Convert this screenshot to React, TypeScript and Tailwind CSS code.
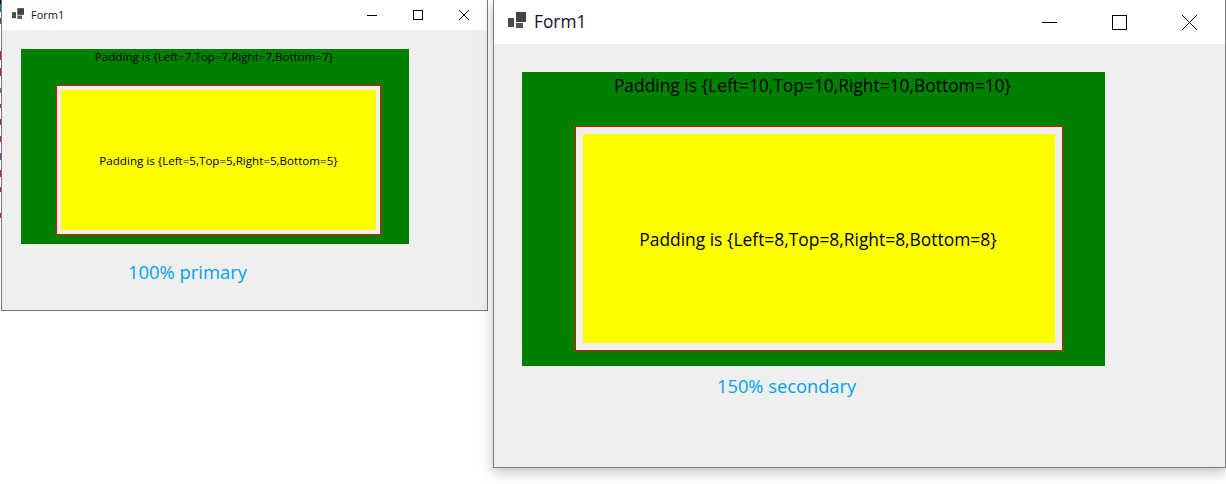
import clsx from 'clsx'

const font = "[font-family:'Open_Sans',sans-serif]"

// bits of the desktop behind the window, left edge of the capture
const desktopEdge = [
  'h-[4px] bg-black',
  'h-[8px] bg-[#0f7f86]',
  'h-[6px] bg-white',
  'h-[6px] bg-[#a8325a]',
  'h-[27px] bg-white',
  'h-[9px] bg-[#b01c66]',
  'h-[8px] bg-white',
  'h-[8px] bg-[#a81c6c]',
  'h-[12px] bg-white',
  'h-[5px] bg-[#a85a50]',
  'h-[11px] bg-white',
  'h-[4px] bg-[#a83060]',
  'h-[11px] bg-white',
  'h-[6px] bg-[#b01c6c]',
  'h-[11px] bg-white',
  'h-[6px] bg-[#a83048]',
  'h-[11px] bg-white',
  'h-[7px] bg-[#8a3a9a]',
  'h-[10px] bg-white',
  'h-[7px] bg-[#b01c66]',
  'h-[10px] bg-white',
  'h-[5px] bg-[#a83048]',
  'h-[21px] bg-white',
  'h-[5px] bg-[#a83048]',
]

function FormIcon({ width, height }: { width: number; height: number }) {
  return (
    <svg width={width} height={height} viewBox="0 0 18 16" className="shrink-0">
      <rect x="0" y="6" width="6" height="9" fill="#4a4a4a" />
      <rect x="8" y="0" width="10" height="10" fill="#444444" />
      <rect x="8" y="11" width="7" height="5" fill="#555555" />
    </svg>
  )
}

// window caption glyphs, drawn 1px and square like the Windows ones
function CaptionButtons({ glyph, width, className }: { glyph: number; width: string; className?: string }) {
  const s = glyph
  return (
    <div className={clsx('ml-auto flex h-full', className)}>
      <div className={`${width} flex items-center justify-center`}>
        <svg width={s} height={s} viewBox={`0 0 ${s} ${s}`}>
          <line x1="0" y1={Math.floor(s / 2) + 0.5} x2={s} y2={Math.floor(s / 2) + 0.5} stroke="#000" />
        </svg>
      </div>
      <div className={`${width} flex items-center justify-center`}>
        <svg width={s} height={s} viewBox={`0 0 ${s} ${s}`}>
          <rect x="0.5" y="0.5" width={s - 1} height={s - 1} fill="none" stroke="#000" />
        </svg>
      </div>
      <div className={`${width} flex items-center justify-center`}>
        <svg width={s} height={s} viewBox={`0 0 ${s} ${s}`}>
          <path d={`M0 0L${s} ${s}M${s} 0L0 ${s}`} stroke="#000" fill="none" />
        </svg>
      </div>
    </div>
  )
}

function App() {
  return (
    <div className={`w-[1226px] h-[484px] bg-white flex items-start overflow-hidden ${font}`}>
      <div className="w-px shrink-0 flex flex-col">
        {desktopEdge.map((c, i) => (
          <div key={i} className={c} />
        ))}
      </div>

      {/* 100% window */}
      <div className="w-[487px] h-[311px] shrink-0 flex flex-col bg-[#efefef] border-l border-r border-b border-[#7a7a7a]">
        <div className="h-[30px] bg-white flex items-center pl-[10px] shrink-0">
          <div className="mt-[-3px]">
            <FormIcon width={12} height={11} />
          </div>
          <span className="ml-[7px] text-[11px] text-[#0f0f2a]">Form1</span>
          <CaptionButtons glyph={10} width="w-[46px]" />
        </div>
        <div className="pl-[19px] pt-[19px]">
          <div className="w-[388px] h-[195px] bg-[#008000] flex flex-col items-center">
            <p className="text-[11.6px] leading-[16px] text-black whitespace-nowrap mr-[2px]">Padding is {'{'}Left=7,Top=7,Right=7,Bottom=7{'}'}</p>
            <div className="mt-5 self-start ml-[35px] w-[325px] h-[150px] border border-[#ff0000] bg-[#efefef] p-[4px] shrink-0">
              <div className="w-full h-full bg-[#ffff00] flex items-center justify-center">
                <p className="text-[11.6px] text-black whitespace-nowrap mt-[2px]">Padding is {'{'}Left=5,Top=5,Right=5,Bottom=5{'}'}</p>
              </div>
            </div>
          </div>
          <p className="ml-[107px] mt-[16px] text-[18.4px] leading-[24px] text-[#00a2ed]">100% primary</p>
        </div>
      </div>

      {/* 150% window */}
      <div className="w-[733px] h-[468px] ml-[5px] shrink-0 flex flex-col bg-[#efefef] border-l border-r border-b border-[#7a7a7a] shadow-[0_4px_12px_rgba(0,0,0,0.25)]">
        <div className="h-[44px] bg-white flex items-center pl-[14px] shrink-0">
          <div className="mt-[-4px]">
            <FormIcon width={18} height={16} />
          </div>
          <span className="ml-[8px] text-[17.3px] text-[#0f0f2a]">Form1</span>
          <CaptionButtons glyph={15} width="w-[70px]" className="pr-px" />
        </div>
        <div className="pl-7 pt-7">
          <div className="w-[583px] h-[294px] bg-[#008000] flex flex-col items-center">
            <p className="text-[17.4px] leading-[26px] text-black whitespace-nowrap mr-[2px]">Padding is {'{'}Left=10,Top=10,Right=10,Bottom=10{'}'}</p>
            <div className="mt-7 self-start ml-[53px] w-[488px] h-[225px] border border-[#ff0000] bg-[#efefef] p-[7px] shrink-0">
              <div className="w-full h-full bg-[#ffff00] flex items-center justify-center">
                <p className="text-[17.4px] text-black whitespace-nowrap mt-[2px] mr-[2px]">Padding is {'{'}Left=8,Top=8,Right=8,Bottom=8{'}'}</p>
              </div>
            </div>
          </div>
          <p className="ml-[195px] mt-[8px] text-[18.3px] leading-[24px] text-[#00a2ed]">150% secondary</p>
        </div>
      </div>
    </div>
  )
}

export default App
